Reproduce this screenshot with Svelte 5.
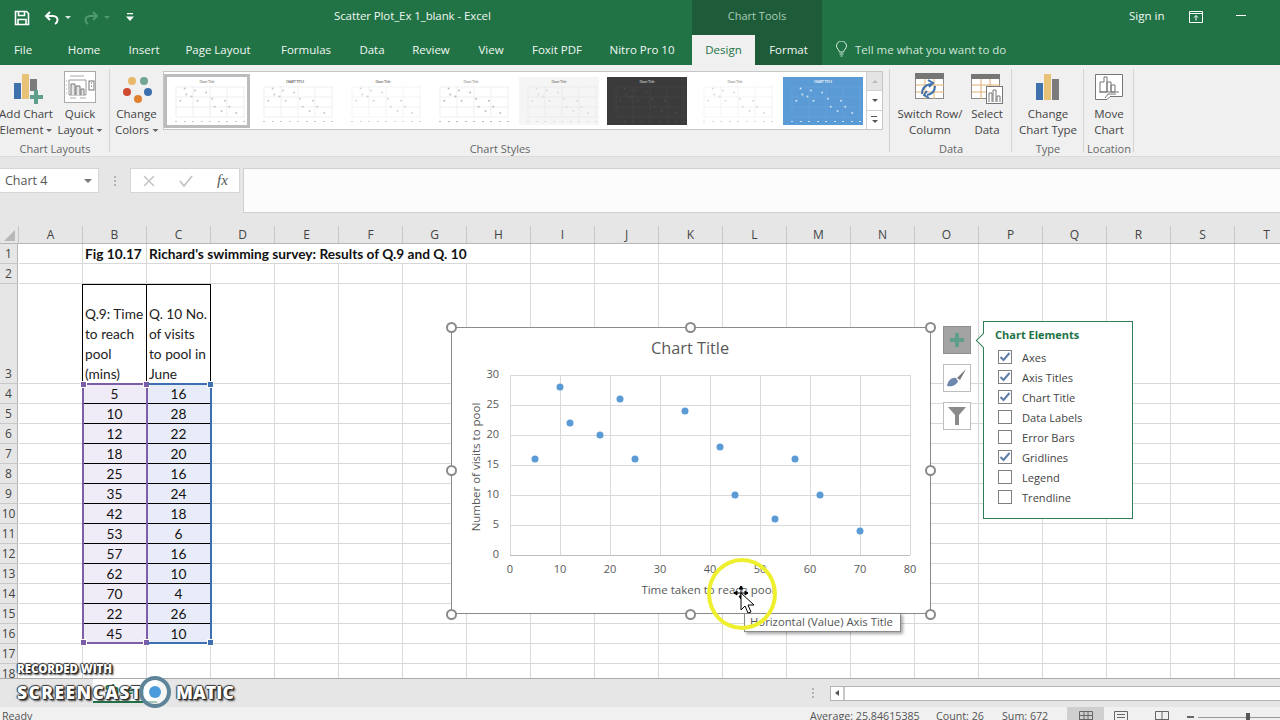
<script>
  const tabs = [
    ['File', 46], ['Home', 76], ['Insert', 44], ['Page Layout', 104], ['Formulas', 72], ['Data', 60],
    ['Review', 58], ['View', 62], ['Foxit PDF', 70], ['Nitro Pro 10', 100]
  ];
  const cols = 'ABCDEFGHIJKLMNOPQRST'.split('');
  const pts = [[5,16],[10,28],[12,22],[18,20],[25,16],[35,24],[42,18],[53,6],[57,16],[62,10],[70,4],[22,26],[45,10]];
  const rows = Array.from({ length: 18 }, (_, i) => i + 1);
  const headB = ['Q.9: Time', 'to reach', 'pool', '(mins)'];
  const headC = ['Q. 10 No.', 'of visits', 'to pool in', 'June'];
  const options = [
    ['Axes', true], ['Axis Titles', true], ['Chart Title', true], ['Data Labels', false],
    ['Error Bars', false], ['Gridlines', true], ['Legend', false], ['Trendline', false]
  ];
  const thumbs = [
    { bg: '#fff', grid: '#e4e4e4', dot: '#c4c4c4', title: 'Chart Title', tc: '#777', sel: true },
    { bg: '#fff', grid: '#e8e8e8', dot: '#c8c8c8', title: 'CHART TITLE', tc: '#555' },
    { bg: '#fff', grid: '#ececec', dot: '#d4d4d4', title: 'Chart Title', tc: '#555' },
    { bg: '#fff', grid: '#e8e8e8', dot: '#bdbdbd', title: 'Chart Title', tc: '#888' },
    { bg: '#f5f5f5', grid: '#e6e6e6', dot: '#dedede', title: 'Chart Title', tc: '#666' },
    { bg: '#3b3b3b', grid: '#484848', dot: '#4a4a4a', title: 'Chart Title', tc: '#ddd' },
    { bg: '#fff', grid: '#ececec', dot: '#dadada', title: 'Chart Title', tc: '#888' },
    { bg: '#5b9bd5', grid: '#69a5da', dot: '#cfe2f3', title: 'CHART TITLE', tc: '#fff' }
  ];
  const px = (x) => 59 + x * 5;
  const py = (y) => 228 - y * 6;
  const tx = (x) => 9 + x * 0.86;
  const ty = (y) => 40 - y * 1.02;
  const handles = [[0,0],[239,0],[479,0],[0,143],[479,143],[0,287],[239,287],[479,287]];
  const yTicks = [0, 5, 10, 15, 20, 25, 30];
  const xTicks = [0, 10, 20, 30, 40, 50, 60, 70, 80];
</script>

<div class="app">
  <header class="titlebar">
    <div class="qat">
      <svg width="16" height="16" viewBox="0 0 16 16" fill="none" stroke="#fff" stroke-width="1.6"><path d="M1.5 1.5h11l2 2v11h-13z"/><path d="M4.5 1.5v4h6v-4M4 14.5v-5h8v5"/></svg>
      <svg class="undo" width="16" height="14" viewBox="0 0 16 14" fill="none" stroke="#fff" stroke-width="2"><path d="M6 1 2 5l4 4M2 5h7c3 0 4.500 2 4.500 4s-1 3-2.500 4"/></svg>
      <span class="caret light"></span>
      <svg class="redo" width="16" height="14" viewBox="0 0 16 14" fill="none" stroke="#4f9a70" stroke-width="2"><path d="m10 1 4 4-4 4M14 5H7C4 5 2.500 7 2.500 9s1 3 2.500 4"/></svg>
      <span class="caret dim"></span>
      <svg class="custom" width="8" height="9" viewBox="0 0 8 9" fill="#fff"><path d="M1 0h6v1.300H1zM0 3.500h8L4 8z"/></svg>
    </div>
    <div class="doc">Scatter Plot_Ex 1_blank - Excel</div>
    <div class="ctx">Chart Tools</div>
    <div class="win">
      <span class="signin">Sign in</span>
      <svg width="14" height="12" viewBox="0 0 14 12" fill="none" stroke="#fff"><path d="M.5.500h13v11H.5zM.5 2.500h13M7 9.500V4.500M5 6.500l2-2 2 2"/></svg>
      <span class="minimize"></span>
    </div>
  </header>

  <nav class="tabs">
    {#each tabs as [name, w]}
      <div class="tab" style="width:{w}px">{name}</div>
    {/each}
    <div class="tab active">Design</div>
    <div class="tab dark">Format</div>
    <div class="tell">
      <svg width="11" height="16" viewBox="0 0 11 16" fill="none" stroke="#d6e9dd"><path d="M3.500 11C3 8.500.5 7.500.5 5a5 5 0 0 1 10 0c0 2.500-2.500 3.500-3 6zM3.500 13h4M4.500 15h2"/></svg>
      <span>Tell me what you want to do</span>
    </div>
  </nav>

  <section class="ribbon">
    <div class="group g1">
      <div class="btns">
        <div class="btn add">
          <svg width="40" height="36" viewBox="0 0 40 36">
            <rect x="8" y="12" width="7" height="16" fill="#3f72ad"/><rect x="16" y="3" width="7" height="25" fill="#e8c277"/><rect x="24" y="8" width="7" height="12" fill="#7b7b7b"/>
            <path d="M24 24h4v-5h4v5h5v4h-5v5h-4v-5h-4z" fill="#5f9e8c"/>
          </svg>
          <div class="lbl">Add Chart<br/>Element <span class="caret"></span></div>
        </div>
        <div class="btn quick">
          <svg width="32" height="33" viewBox="0 0 32 33" fill="none">
            <rect x=".5" y=".5" width="31" height="31" fill="#fff" stroke="#aaa"/>
            <path d="M6 5h14M2 10h1M2 14h1M2 18h1M2 22h1M6 27h6M16 27h6" stroke="#aaa"/>
            <path d="M5 9h17v15H5z" stroke="#999"/>
            <path d="M7 24V13h4v11M12 24V15h4v9M17 24v-6h3v6" stroke="#777" fill="#e6e6e6"/>
            <rect x="25" y="10" width="5" height="9" stroke="#777"/><path d="M27 12h1M27 15h1" stroke="#555"/>
          </svg>
          <div class="lbl">Quick<br/>Layout <span class="caret"></span></div>
        </div>
      </div>
      <div class="glabel">Chart Layouts</div>
    </div>

    <div class="group g2">
      <div class="btns">
        <div class="btn colors">
          <svg width="30" height="32" viewBox="0 0 30 32">
            <circle cx="10" cy="7" r="4" fill="#e8b868"/><circle cx="22" cy="7" r="4" fill="#6fa594"/>
            <circle cx="5" cy="18" r="4" fill="#cf4a2e"/><circle cx="26" cy="18" r="4" fill="#3c70ad"/><circle cx="16" cy="25" r="4" fill="#e0812f"/>
          </svg>
          <div class="lbl">Change<br/>Colors <span class="caret"></span></div>
        </div>
        <div class="gallery">
          {#each thumbs as t}
            <div class="thumb" class:sel={t.sel}>
              <svg width="80" height="48" viewBox="0 0 80 48">
                <rect width="80" height="48" fill={t.bg}/>
                {#each [10,20,30,40] as y}<path d="M9 {y}H78" stroke={t.grid} stroke-width=".6"/>{/each}
                {#each [9,26,43,60,77] as x}<path d="M{x} 9V40" stroke={t.grid} stroke-width=".6"/>{/each}
                <text x="40" y="6" class="mini" fill={t.tc}>{t.title}</text>
                {#each pts as [x, y]}<circle cx={tx(x)} cy={ty(y)} r="1" fill={t.dot}/>{/each}
                {#each [9,18,26,35,43,52,60,69,77] as x}<rect x={x - 1} y="44" width="2" height="1" fill={t.dot}/>{/each}
              </svg>
            </div>
          {/each}
          <div class="scroller">
            <div class="sb off"><span class="up"></span></div>
            <div class="sb"><span class="down"></span></div>
            <div class="sb more"><span class="down"></span></div>
          </div>
        </div>
      </div>
      <div class="glabel">Chart Styles</div>
    </div>

    <div class="group g3">
      <div class="btns">
        <div class="btn switch">
          <svg width="30" height="27" viewBox="0 0 30 27" fill="none">
            <rect x=".5" y="3.500" width="28" height="22" fill="#fff" stroke="#8a8a8a"/>
            <rect y="0" width="29" height="6" fill="#767676"/>
            <path d="M1 12h28M1 19h28M10 6v20M19 6v20" stroke="#e0b070"/>
            <path d="M7 21c0-5 3-9 9-10M13 7l5 3-4 4M20 13c0 5-3 8-8 9M14 25l-5-3 3-4" stroke="#3f72ad" stroke-width="2"/>
          </svg>
          <div class="lbl">Switch Row/<br/>Column</div>
        </div>
        <div class="btn select">
          <svg width="32" height="30" viewBox="0 0 32 30" fill="none">
            <rect x=".5" y=".5" width="28" height="24" fill="#fff" stroke="#8a8a8a"/>
            <rect width="29" height="5" fill="#767676"/>
            <path d="M1 11h28M1 18h28M10 5v20M19 5v20" stroke="#dfae70"/>
            <rect x="15.500" y="12.500" width="16" height="17" fill="#fff" stroke="#777"/>
            <path d="M18 28V19h3v9M22 28V16h3v12M26 28v-6h3v6" stroke="#777"/>
          </svg>
          <div class="lbl">Select<br/>Data</div>
        </div>
      </div>
      <div class="glabel">Data</div>
    </div>

    <div class="group g4">
      <div class="btns">
        <div class="btn full">
          <svg width="24" height="28" viewBox="0 0 24 28">
            <rect y="9" width="7" height="17" fill="#3f72ad"/><rect x="8" y="0" width="7" height="26" fill="#e8c277"/><rect x="16" y="5" width="7" height="21" fill="#7b7b7b"/>
          </svg>
          <div class="lbl">Change<br/>Chart Type</div>
        </div>
      </div>
      <div class="glabel">Type</div>
    </div>

    <div class="group g5">
      <div class="btns">
        <div class="btn full">
          <svg width="29" height="27" viewBox="0 0 29 27" fill="none" stroke="#777">
            <path d="M.5.500h27v22H15l-3 3H.5z" fill="#fff"/>
            <path d="M5 18V8h4V3h3v15zM12 18V8h4v10M16 18v-7h4v7zM4 18h20"/>
            <path d="M10 24l3-4h8" />
          </svg>
          <div class="lbl">Move<br/>Chart</div>
        </div>
      </div>
      <div class="glabel">Location</div>
    </div>
  </section>

  <section class="fbar">
    <div class="namebox"><span>Chart 4</span><span class="caret"></span></div>
    <div class="vdots"></div>
    <div class="fxbox">
      <svg width="12" height="12" viewBox="0 0 12 12" stroke="#c4c4c4" stroke-width="1.500"><path d="m1 1 10 10M11 1 1 11"/></svg>
      <svg width="14" height="12" viewBox="0 0 14 12" fill="none" stroke="#c4c4c4" stroke-width="1.800"><path d="m1 6 4 5 8-10"/></svg>
      <i>fx</i>
    </div>
    <div class="finput"></div>
  </section>

  <div class="colhead">
    <div class="corner"><span></span></div>
    {#each cols as c}<div class="ch">{c}</div>{/each}
  </div>

  <main class="sheet">
    <div class="grid">
      {#each rows as r}
        <div class="rh">{r}</div>
        {#each cols as c}
          {#if r === 1 && c === 'B'}
            <div class="cell bold">Fig 10.17</div>
          {:else if r === 1 && c === 'C'}
            <div class="cell bold over">Richard's swimming survey: Results of Q.9 and Q. 10</div>
          {:else if r === 1 && 'DEFG'.includes(c)}
            <div class="cell plain"></div>
          {:else if r === 3 && c === 'B'}
            <div class="cell hd">{#each headB as l}<div>{l}</div>{/each}</div>
          {:else if r === 3 && c === 'C'}
            <div class="cell hd">{#each headC as l}<div>{l}</div>{/each}</div>
          {:else if r > 3 && r < 17 && c === 'B'}
            <div class="cell num fb">{[5,10,12,18,25,35,42,53,57,62,70,22,45][r - 4]}</div>
          {:else if r > 3 && r < 17 && c === 'C'}
            <div class="cell num fc">{[16,28,22,20,16,24,18,6,16,10,4,26,10][r - 4]}</div>
          {:else}
            <div class="cell"></div>
          {/if}
        {/each}
      {/each}
    </div>

    <div class="selb"><i class="h tl"></i><i class="h tr"></i><i class="h bl"></i><i class="h br"></i></div>
    <div class="selc"><i class="h tr b"></i><i class="h br b"></i></div>

    <div class="chart">
      <svg width="480" height="287" viewBox="0 0 480 287">
        <text x="239" y="27" class="ctitle">Chart Title</text>
        {#each yTicks as t}
          <path d="M59 {py(t) + .5}H459" stroke={t === 0 ? '#bdbdbd' : '#d9d9d9'}/>
          <text x="48" y={py(t) + 3} class="tick end">{t}</text>
        {/each}
        {#each xTicks as t}
          <path d="M{px(t) + .5} 48V228" stroke="#d9d9d9"/>
          <text x={px(t)} y="246" class="tick mid">{t}</text>
        {/each}
        <text class="atitle mid" transform="translate(29 140) rotate(-90)">Number of visits to pool</text>
        <text class="atitle mid" x="257" y="267">Time taken to reach pool</text>
        {#each pts as [x, y]}<circle cx={px(x)} cy={py(y)} r="3.500" fill="#5b9bd5"/>{/each}
      </svg>
      {#each handles as [x, y]}
        <span class="grip" style="left:{x}px;top:{y}px"></span>
      {/each}
    </div>

    <div class="side s1"><svg width="16" height="16" viewBox="0 0 16 16"><path d="M6 1h4v5h5v4h-5v5H6v-5H1V6h5z" fill="#5f9e8c"/></svg></div>
    <div class="side s2"><svg width="22" height="20" viewBox="0 0 22 20"><path d="M1 18c1-6 5-9 9-8l2 3c-1 4-6 6-11 5z" fill="#6d87ad"/><path d="M11 10l9-9-6 11z" fill="#777"/></svg></div>
    <div class="side s3"><svg width="20" height="20" viewBox="0 0 20 20"><path d="M1 1h18l-7 8v10H8V9z" fill="#8a8a8a"/></svg></div>

    <aside class="panel">
      <span class="notch"></span>
      <div class="ptitle">Chart Elements</div>
      {#each options as [label, on]}
        <div class="opt">
          <span class="box">
            {#if on}<svg width="12" height="10" viewBox="0 0 12 10" fill="none" stroke="#5d7ca8" stroke-width="2"><path d="m1.500 5 3 3 6-7"/></svg>{/if}
          </span>
          <span>{label}</span>
        </div>
      {/each}
    </aside>

    <div class="tip">Horizontal (Value) Axis Title</div>
    <div class="ring"></div>
    <svg class="pointer" width="26" height="34" viewBox="0 0 26 34">
      <path d="M9 4v4M9 4l-1.500 2M9 4l1.500 2M9 12v3M3 10h12M3 10l2-1.500M3 10l2 1.500M15 10l-2-1.500M15 10l-2 1.500" fill="none" stroke="#fff" stroke-width="3"/>
      <path d="M9 3v13M2 10h14M9 3 7 6h4zM9 16 7 13h4zM2 10l3-2v4zM16 10l-3-2v4z" fill="#000" stroke="#000"/>
      <path d="M9 10v17l4-4 3 7 3-1-3-7h6z" fill="#fff" stroke="#000"/>
    </svg>
  </main>

  <footer class="sheetbar">
    <div class="sheettab">Sheet1</div>
    <div class="sbdots"></div>
    <div class="hscroll"><span class="left"></span></div>
  </footer>

  <footer class="status">
    <span class="ready">Ready</span>
    <span class="s-avg">Average: 25.84615385</span>
    <span class="s-count">Count: 26</span>
    <span class="s-sum">Sum: 672</span>
    <span class="view on"><svg width="14" height="13" viewBox="0 0 14 13" fill="none" stroke="#666"><path d="M.5.500h13v12H.5zM.5 4.500h13M.5 8.500h13M5 .500v12M9 .500v12"/></svg></span>
    <span class="view v2"><svg width="14" height="13" viewBox="0 0 14 13" fill="none" stroke="#666"><path d="M.5.500h13v12H.5zM3 3.500h8M3 6.500h8M3 9.500h8"/></svg></span>
    <span class="view v3"><svg width="14" height="13" viewBox="0 0 14 13" fill="none" stroke="#666"><path d="M.5.500h13v12H.5zM7 .500v12M.5 8.500h13"/></svg></span>
    <span class="zoomctl"><span class="minus"></span><span class="track"><span class="knob"></span></span></span>
  </footer>

  <div class="mark">
    <div class="rec">RECORDED WITH</div>
    <div class="brand">
      <span class="sc">SCREENCAST</span>
      <span class="logo"><span></span></span>
      <span>MATIC</span>
    </div>
  </div>
</div>

<style>
  :global(body) { margin: 0; background: #fff; }
  .app {
    position: relative; width: 1280px; height: 720px; overflow: hidden; display: flex; flex-direction: column;
    font-family: "Open Sans", "Noto Sans", sans-serif; font-size: 12px; color: #444; background: #fff;
  }
  .caret { display: inline-block; width: 0; height: 0; border-left: 3px solid transparent; border-right: 3px solid transparent; border-top: 3px solid #666; vertical-align: middle; }
  .caret.light { border-top-color: #d9e9df; margin-left: 5px; }
  .caret.dim { border-top-color: #4f9a70; margin-left: 5px; }

  .titlebar { height: 35px; background: #217346; display: grid; grid-template-columns: 334px 358px 130px 1fr; align-items: center; color: #fff; flex: none; }
  .qat { display: flex; align-items: center; padding-left: 14px; }
  .undo { margin-left: 14px; }
  .redo { margin-left: 12px; }
  .custom { margin-left: 16px; }
  .doc { font-size: 11.5px; color: #eef6f1; letter-spacing: -.1px; padding-bottom: 4px; }
  .ctx { background: #1e5c39; height: 35px; line-height: 31px; text-align: center; font-size: 11px; color: #a9cdb8; }
  .win { display: flex; align-items: center; }
  .signin { margin-left: 307px; font-size: 11.5px; color: #f2f8f4; padding-bottom: 4px; }
  .win svg { margin-left: 25px; margin-bottom: 2px; }
  .minimize { width: 10px; height: 1px; background: #fff; margin-left: 33px; margin-bottom: 5px; }

  .tabs { height: 30px; background: #217346; display: flex; color: #f1f7f3; flex: none; }
  .tab { text-align: center; line-height: 29px; font-size: 11.5px; }
  .tab.active { width: 63px; background: #f0f0f0; color: #217346; }
  .tab.dark { width: 67px; background: #1e5c39; }
  .tell { display: flex; align-items: center; gap: 8px; padding-left: 14px; font-size: 11.5px; color: #cfe5d8; padding-bottom: 2px; height: 28px; }
  .tell svg { margin-bottom: 1px; }

  .ribbon { height: 92px; background: #f0f0f0; display: flex; flex: none; border-bottom: 1px solid #dcdcdc; box-sizing: border-box; }
  .group { display: flex; flex-direction: column; box-sizing: border-box; margin-top: 4px; position: relative; }
  .group::after { content: ""; position: absolute; right: 0; top: 0; bottom: 4px; width: 1px; background: #d4d4d4; }
  .g1 { width: 110px; }
  .g2 { width: 780px; }
  .g3 { width: 122px; }
  .g4 { width: 72px; }
  .g5 { width: 50px; }
  .btns { flex: 1; display: flex; }
  .btn { display: flex; flex-direction: column; align-items: center; font-size: 11.5px; line-height: 16px; color: #444; position: relative; }
  .btn svg { flex: none; }
  .btn .lbl { text-align: center; white-space: nowrap; position: absolute; top: 37px; left: 50%; transform: translateX(-50%); }
  .add { width: 52px; }
  .add svg { margin-top: 2px; }
  .quick { width: 52px; margin-left: 2px; }
  .quick svg { margin-top: 2px; }
  .colors { width: 53px; }
  .colors svg { margin-top: 5px; }
  .gallery { width: 720px; height: 59px; margin-top: 2px; box-sizing: border-box; background: #fff; border: 1px solid #c6c6c6; border-right: 1px solid #c6c6c6; display: flex; align-items: center; gap: 8px; padding-left: 3px; position: relative; }
  .thumb { width: 80px; height: 48px; flex: none; position: relative; }
  .thumb svg { display: block; }
  .thumb.sel { outline: 3px solid #bcbcbc; outline-offset: 0; }
  .mini { font-size: 3px; text-anchor: middle; font-weight: 600; }
  .scroller { position: absolute; right: 0; top: 0; bottom: 0; width: 15px; display: flex; flex-direction: column; border-left: 1px solid #d0d0d0; }
  .sb { flex: 1; display: flex; align-items: center; justify-content: center; border-bottom: 1px solid #d0d0d0; background: #fff; position: relative; }
  .sb:last-child { border-bottom: 0; }
  .sb.off { background: #e4e4e4; }
  .up { border-left: 3px solid transparent; border-right: 3px solid transparent; border-bottom: 3px solid #bbb; }
  .down { border-left: 3px solid transparent; border-right: 3px solid transparent; border-top: 3px solid #555; }
  .more::before { content: ""; position: absolute; top: 5px; left: 4px; width: 6px; height: 1px; background: #555; }
  .more .down { margin-top: 3px; }
  .glabel { height: 15px; line-height: 15px; text-align: center; font-size: 11px; color: #666; flex: none; }
  .switch { width: 76px; margin-left: 2px; }
  .switch svg { margin-top: 4px; }
  .select { width: 38px; }
  .select svg { margin-top: 5px; }
  .full { flex: 1; }
  .full svg { margin-top: 5px; }
  .g4 .full { padding-right: 1px; }

  .fbar { height: 56px; background: #e6e6e6; flex: none; display: flex; align-items: flex-start; padding-top: 11px; box-sizing: border-box; }
  .namebox { width: 99px; height: 25px; box-sizing: border-box; background: #fff; border: 1px solid #d6d6d6; border-left: 0; display: flex; align-items: center; justify-content: space-between; padding: 0 6px 0 5px; font-size: 12.5px; color: #555; }
  .namebox .caret { border-left-width: 4px; border-right-width: 4px; border-top-width: 4px; border-top-color: #777; }
  .vdots { width: 2px; height: 10px; margin: 8px 15px 0 15px; background: repeating-linear-gradient(#b4b4b4 0 2px, transparent 2px 4px); }
  .fxbox { width: 110px; height: 25px; box-sizing: border-box; background: #fff; border: 1px solid #d6d6d6; display: flex; align-items: center; gap: 24px; padding-left: 12px; margin-left: -1px; }
  .fxbox i { font-family: "Liberation Serif", serif; font-size: 15px; color: #555; }
  .finput { flex: 1; height: 45px; margin-left: 3px; box-sizing: border-box; background: #fcfcfc; border: 1px solid #d0d0d0; border-right: 0; }

  .colhead { height: 31px; flex: none; background: #e6e6e6; display: grid; grid-template-columns: 19px repeat(20, 64px); border-bottom: 1px solid #b8b8b8; box-sizing: border-box; padding-top: 13px; }
  .corner { position: relative; border-right: 1px solid #c4c4c4; }
  .corner span { position: absolute; right: 3px; bottom: 2px; border-left: 11px solid transparent; border-bottom: 11px solid #b8b8b8; }
  .ch { text-align: center; line-height: 17px; font-size: 12px; border-right: 1px solid #c8c8c8; color: #444; }

  .sheet { position: relative; flex: 1; overflow: hidden; background: #fff; min-height: 0; }
  .grid { display: grid; grid-template-columns: 19px repeat(20, 64px); grid-template-rows: 20px 20px 100px repeat(15, 20px); font-family: Lato, "Open Sans", sans-serif; font-size: 13.7px; color: #111; }
  .rh { background: #e6e6e6; border-right: 1px solid #b8b8b8; margin-right: 1px; border-bottom: 1px solid #c8c8c8; box-sizing: border-box; text-align: center; font-family: "Open Sans", sans-serif; font-size: 12px; color: #444; line-height: 18px; display: flex; align-items: flex-end; justify-content: center; }
  .cell { border-right: 1px solid #d8d8d8; border-bottom: 1px solid #d8d8d8; box-sizing: border-box; line-height: 20px; padding: 0 2px; white-space: nowrap; min-width: 0; }
  .cell.plain { border-right: 0; }
  .bold { font-weight: bold; }
  .over { border-right: 0; position: relative; z-index: 1; overflow: visible; }
  .hd { border: 1px solid #000; border-left: 1px solid #000; display: flex; flex-direction: column; justify-content: flex-end; border-bottom: 0; margin-left: -1px; padding-left: 2px; color: #222; }
  .num { text-align: center; border-bottom: 1px solid #000; border-right: 1px solid #000; line-height: 20px; }
  .fb { background: #efebf7; }
  .fc { background: #e8ecf8; }

  .selb, .selc { position: absolute; top: 139px; height: 261px; box-sizing: border-box; border: 2px solid #7b5ea7; }
  .selb { left: 82px; width: 66px; }
  .selc { left: 148px; width: 64px; border-color: #3f6fb3; border-left: 0; }
  .h { position: absolute; width: 5px; height: 5px; background: #7b5ea7; border: 1px solid #fff; }
  .h.b { background: #3f6fb3; }
  .tl { left: -4px; top: -4px; }
  .tr { right: -4px; top: -4px; }
  .bl { left: -4px; bottom: -4px; }
  .br { right: -4px; bottom: -4px; }

  .chart { position: absolute; left: 451px; top: 83px; width: 480px; height: 287px; box-sizing: border-box; background: #fff; outline: 1.500px solid #8a8a8a; outline-offset: -1px; }
  .chart svg { display: block; }
  .ctitle { font-size: 16.300px; fill: #595959; text-anchor: middle; }
  .tick { font-size: 11px; fill: #595959; }
  .end { text-anchor: end; }
  .mid { text-anchor: middle; }
  .atitle { font-size: 11.500px; fill: #595959; }
  .grip { position: absolute; width: 11px; height: 11px; margin: -5px 0 0 -5px; box-sizing: border-box; border-radius: 50%; background: #fff; border: 2px solid #8a8a8a; }

  .side { position: absolute; left: 943px; width: 28px; height: 28px; box-sizing: border-box; background: #fff; border: 1px solid #bdbdbd; display: flex; align-items: center; justify-content: center; }
  .s1 { top: 82px; background: #a3a3a3; border-color: #8f8f8f; }
  .s2 { top: 120px; }
  .s3 { top: 158px; }

  .panel { position: absolute; left: 983px; top: 77px; width: 150px; height: 198px; box-sizing: border-box; background: #fff; border: 1px solid #2f7d58; padding: 4px 0 0 14px; font-family: "Open Sans", sans-serif; font-size: 11.100px; color: #444; }
  .notch { position: absolute; left: -6px; top: 13px; width: 10px; height: 10px; background: #fff; border-left: 1px solid #2f7d58; border-bottom: 1px solid #2f7d58; transform: rotate(45deg) scaleY(1); }
  .ptitle { font-weight: bold; color: #217346; font-size: 11px; height: 21px; line-height: 17px; margin-left: -3px; }
  .opt { display: flex; align-items: center; gap: 10px; height: 20px; }
  .box { width: 14px; height: 14px; box-sizing: border-box; border: 1px solid #808080; background: #fff; display: flex; align-items: center; justify-content: center; }

  .ring { position: absolute; left: 707px; top: 314px; width: 70px; height: 72px; box-sizing: border-box; border: 4px solid #eef02e; border-radius: 50%; }
  .tip { position: absolute; left: 744px; top: 369px; width: 157px; height: 19px; box-sizing: border-box; background: #fff; border: 1px solid #8a8a8a; box-shadow: 2px 2px 3px rgba(0,0,0,.35); font-size: 11.300px; line-height: 16px; padding-left: 5px; color: #555; white-space: nowrap; }
  .pointer { position: absolute; left: 732px; top: 339px; }

  .sheetbar { height: 29px; flex: none; background: #e6e6e6; border-top: 1px solid #aaa; box-sizing: border-box; position: relative; display: flex; align-items: center; }
  .sheettab { margin-left: 93px; width: 64px; height: 24px; margin-top: -5px; box-sizing: border-box; background: #fff; border-bottom: 2px solid #217346; text-align: center; color: #217346; font-weight: bold; font-size: 12px; line-height: 22px; }
  .sbdots { width: 2px; height: 10px; margin-left: 655px; background: repeating-linear-gradient(#b4b4b4 0 2px, transparent 2px 4px); }
  .hscroll { margin-left: 16px; flex: 1; height: 15px; background: #fff; border: 1px solid #b4b4b4; border-right: 0; box-sizing: border-box; display: flex; align-items: center; }
  .left { display: block; width: 14px; height: 13px; border-right: 2px solid #c8c8c8; position: relative; box-sizing: border-box; }
  .left::after { content: ""; position: absolute; left: 4px; top: 3px; border-top: 3.500px solid transparent; border-bottom: 3.500px solid transparent; border-right: 4px solid #555; }

  .status { height: 13px; flex: none; background: #f0f0f0; display: flex; font-size: 10.700px; color: #555; line-height: 18px; position: relative; overflow: hidden; align-items: flex-start; }
  .status > span { flex: none; }
  .ready { margin-left: 2px; width: 808px; }
  .s-avg { width: 126px; white-space: nowrap; }
  .s-count { width: 66px; white-space: nowrap; }
  .s-sum { width: 65px; white-space: nowrap; }
  .view { width: 37px; height: 13px; display: flex; justify-content: center; padding-top: 4px; box-sizing: border-box; }
  .view.on { background: #cfcfcf; }
  .view.v2 { width: 33px; }
  .view.v3 { width: 50px; }
  .zoomctl { display: flex; align-items: center; height: 13px; padding-top: 7px; box-sizing: border-box; }
  .minus { width: 7px; height: 2px; background: #666; margin-right: 4px; }
  .track { width: 90px; height: 1px; background: #999; position: relative; display: block; }
  .knob { position: absolute; left: 48px; top: -4px; width: 4px; height: 10px; background: #555; }

  .mark { position: absolute; left: 17px; top: 661px; color: #fff; font-weight: 800; text-shadow: 1px 1px 1px #222, -1px 0 1px #333, 0 -1px 1px #333, 1px 0 1px #333, 2px 2px 2px #444; font-family: "Open Sans", sans-serif; }
  .rec { font-size: 11.500px; line-height: 15px; letter-spacing: -.1px; }
  .brand { display: flex; align-items: center; font-size: 17.500px; line-height: 34px; margin-top: -1px; letter-spacing: .1px; }
  .sc { width: 122px; white-space: nowrap; letter-spacing: 1.400px; }
  .logo { width: 32px; height: 32px; margin: 0 5px 0 0; box-sizing: border-box; border-radius: 50%; border: 4px solid #5d8498; background: rgba(255,255,255,.6); display: flex; align-items: center; justify-content: center; }
  .logo span { width: 12px; height: 12px; border-radius: 50%; background: #4a9bdc; }
</style>
